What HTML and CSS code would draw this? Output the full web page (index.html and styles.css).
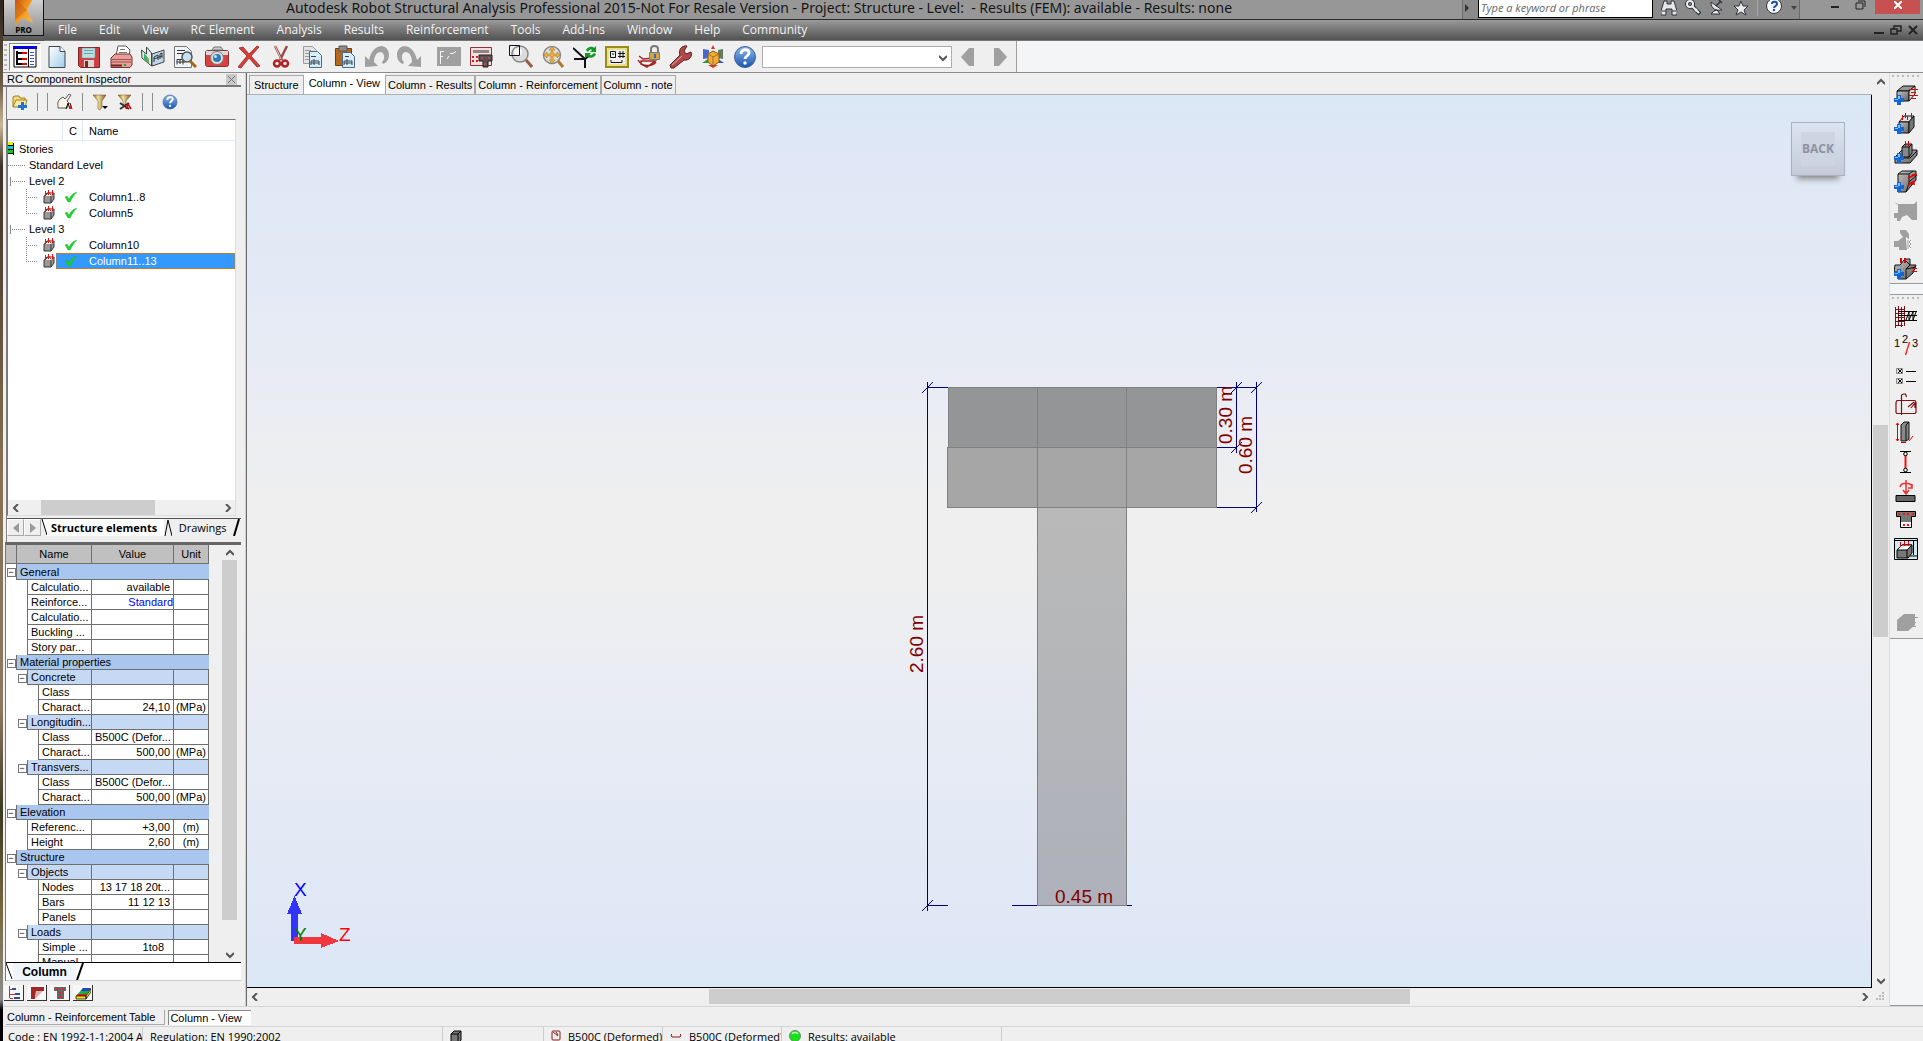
FILE: index.html
```
<!DOCTYPE html>
<html lang="en">
<head>
    <meta charset="utf-8">
    <title>Autodesk Robot Structural Analysis Professional 2015</title>
    <link rel="stylesheet" href="styles.css">
</head>
<body>
    <!-- Icon sprite, every icon is used by id -->
    <svg class="sprite" xmlns="http://www.w3.org/2000/svg">
        <defs>
            <linearGradient id="g-blue" x1="0" y1="0" x2="0" y2="1"><stop offset="0" stop-color="#8db9ea"/><stop offset="1" stop-color="#1a55b0"/></linearGradient>
            <linearGradient id="g-page" x1="0" y1="0" x2="1" y2="1"><stop offset="0" stop-color="#fff"/><stop offset="1" stop-color="#9fcdea"/></linearGradient>
            <linearGradient id="g-gold" x1="0" y1="0" x2="1" y2="0"><stop offset="0" stop-color="#8a6420"/><stop offset=".4" stop-color="#f3dfa0"/><stop offset="1" stop-color="#7c5717"/></linearGradient>
            <linearGradient id="g-grey" x1="0" y1="0" x2="1" y2="1"><stop offset="0" stop-color="#c4c4c4"/><stop offset="1" stop-color="#5f5f5f"/></linearGradient>
            <linearGradient id="g-logo" x1="0" y1="0" x2="1" y2="1"><stop offset="0" stop-color="#c8500f"/><stop offset=".5" stop-color="#f39a1e"/><stop offset="1" stop-color="#fbc55a"/></linearGradient>
        </defs>
        <symbol id="i-inspector" viewBox="0 0 24 24"><path d="M1 2h22v20H1z" fill="#fff" stroke="#000"/><path d="M0 1h24v3H0z" fill="#0000e0"/><path d="M4 6v14M4 8h7M4 14h7M4 19h7" stroke="#000" stroke-width="2" fill="none"/><path d="M9 7h5v2H9zM9 13h5v2H9zM9 18h5v2H9z" fill="#e00000"/><path d="M15.500 4v18" stroke="#000"/><path d="M17 7.500h4M17 10.500h4M17 13.500h4M17 16.500h4M17 19.500h4" stroke="#2a5be0"/></symbol>
        <symbol id="i-new" viewBox="0 0 24 24"><path d="M4 1.500h11l5 5v16H4z" fill="url(#g-page)" stroke="#3c4650"/><path d="M15 1.500v5h5" fill="#fff" stroke="#3c4650"/></symbol>
        <symbol id="i-save" viewBox="0 0 24 24"><path d="M1.500 2.500h21v20h-19l-2-2z" fill="#cf3f42" stroke="#7e2425"/><path d="M5 3h13v10H5z" fill="#b9dfe2" stroke="#8b8b8b" stroke-width=".5"/><path d="M7 5.500h9M7 8.500h9" stroke="#69a7ad"/><path d="M7 15h10v7H7z" fill="#d8d8d8"/><path d="M8 16h3v6H8z" fill="#7e2425"/></symbol>
        <symbol id="i-print" viewBox="0 0 24 24"><path d="M7 11l2-10h8l4 4-1 6z" fill="#fff" stroke="#555"/><path d="M11 4.500h5M10 7.500h8" stroke="#777"/><path d="M2 13l4-4h15l2 3v8l-2 2.500H2z" fill="#e3a09c" stroke="#7c2f2f"/><path d="M2 14.500h20M2 17h20" stroke="#a64c4a"/><path d="M15 19h2v2h-2z" fill="#1da52b"/><path d="M2 20.500h11" stroke="#6d2424" stroke-width="2"/></symbol>
        <symbol id="i-book" viewBox="0 0 24 24"><path d="M.500 5l5 4V2l5 6v13L1 13z" fill="#dfeee9" stroke="#444"/><path d="M3 8l5 6v5l-5-5z" fill="#36b36b"/><path d="M5 11l3 4v3z" fill="#e58b2a"/><path d="M11 21V9l12-4v12z" fill="#bdd6ea" stroke="#444"/><path d="M13 17v-5l4-2v5M19 14V9l2-1v5M13 14l8-3" stroke="#333" fill="none"/></symbol>
        <symbol id="i-preview" viewBox="0 0 24 24"><path d="M1.500 1.500h12l5 5v16h-17z" fill="#eef6fb" stroke="#777"/><path d="M4 5.500h8M4 8.500h6M4 19.500v-5h6v5M4 17h8M7 14v5" stroke="#333" fill="none"/><circle cx="14" cy="12" r="5" fill="#bcdcf3" fill-opacity=".8" stroke="#555" stroke-width="1.500"/><path d="M17 16l6 6" stroke="#9a6d1d" stroke-width="3"/></symbol>
        <symbol id="i-camera" viewBox="0 0 24 24"><rect x=".5" y="5.500" width="23" height="16" rx="2" fill="#d9403e" stroke="#7d3535"/><path d="M7 5l2-3h7l2 3z" fill="#ccc" stroke="#777"/><path d="M1 6h22v4H1z" fill="#d9d9d9"/><circle cx="12" cy="13" r="6.500" fill="#ddd" stroke="#777"/><circle cx="12" cy="13" r="4" fill="#2f79b7"/><circle cx="10.500" cy="11.500" r="1.500" fill="#bfe6fb"/></symbol>
        <symbol id="i-delete" viewBox="0 0 24 24"><path d="M2 3l4-1 6 7 8-8 2 1-8 9 9 10-3 1-8-9-8 10-3-1 9-11z" fill="#dc3d3b" stroke="#8d2a29" stroke-width=".8"/></symbol>
        <symbol id="i-cut" viewBox="0 0 24 24"><path d="M6 1l7 14M18 1l-7 14" stroke="#9b4a4a" stroke-width="2.500"/><path d="M6 1l6 13" stroke="#e2c6c6"/><circle cx="8" cy="18.500" r="3" fill="none" stroke="#b22222" stroke-width="2.500"/><circle cx="16" cy="18.500" r="3" fill="none" stroke="#b22222" stroke-width="2.500"/></symbol>
        <symbol id="i-copy" viewBox="0 0 24 24"><path d="M2.500 1.500h9l4 4v13h-13z" fill="#e3e3e3" stroke="#999"/><path d="M4 5.500h6M4 8.500h6M4 11.500h4M4 14.500h4" stroke="#999"/><path d="M8.500 6.500h8l4 4v12h-12z" fill="#d6ecf8" stroke="#4c6b80"/><path d="M10 11.500h5M10 20v-4h8v4M10 18h8M13 14v6" stroke="#345" fill="none"/></symbol>
        <symbol id="i-paste" viewBox="0 0 24 24"><path d="M2.500 3.500h16v17h-16z" fill="#b5681f" stroke="#6f3f12"/><path d="M6 1h8v5H6z" fill="#8c8c8c" stroke="#555"/><path d="M9.500 7.500h8l4 4v11h-12z" fill="#d6ecf8" stroke="#4c6b80"/><path d="M12 11.500h4M11 20v-4h8v4M11 18h8M14 14v6" stroke="#345" fill="none"/></symbol>
        <symbol id="i-undo" viewBox="0 0 24 24"><path d="M0 22V11l4 4C6 6 11 1 17 1c5 1 7 5 7 9 0 5-3 8-6 9l-1-2c3-2 3-9-1-10-5 0-7 5-7 10l4 4z" fill="#a0a0a0"/></symbol>
        <symbol id="i-redo" viewBox="0 0 24 24"><path d="M24 22V11l-4 4C18 6 13 1 7 1 2 2 0 6 0 10c0 5 3 8 6 9l1-2c-3-2-3-9 1-10 5 0 7 5 7 10l-4 4z" fill="#a0a0a0"/></symbol>
        <symbol id="i-chart" viewBox="0 0 24 24"><path d="M0 2h24v19H0z" fill="#a0a0a0"/><path d="M3.500 19V6M3 6.500h4M4 11.500h2M13 8.500h3l3-2M12 11l-2 3" stroke="#f4f4f4" fill="none"/></symbol>
        <symbol id="i-calc" viewBox="0 0 24 24"><path d="M1.500 2.500h21v18h-21z" fill="#f6dcdc" stroke="#8a3434"/><path d="M4 5h16v3H4z" fill="#888"/><path d="M3 11h2v2H3zM7 11h2v2H7zM3 15h2v2H3zM7 15h2v2H7z" fill="#c22"/><path d="M10 10h13v6h-4v6h-5v-6h-4z" fill="#555" stroke="#222"/><path d="M12 12h2v2h-2zM19 12h2v2h-2zM15 18h2v2h-2z" fill="#e33"/></symbol>
        <symbol id="i-zoom" viewBox="0 0 24 24"><circle cx="11" cy="9" r="8" fill="#dcdcdc" stroke="#888" stroke-width="1.500"/><circle cx="9" cy="7" r="4" fill="#f6f6f6"/><path d="M.500.500h10v10H.500z" fill="none" stroke="#111"/><path d="M17 15l6 7" stroke="#9c5a44" stroke-width="3"/></symbol>
        <symbol id="i-zoomall" viewBox="0 0 24 24"><circle cx="11" cy="10" r="8.500" fill="#dcdcdc" stroke="#888" stroke-width="1.500"/><path d="M11 2l3 3h-2v4h4V7l3 3-3 3v-2h-4v4h2l-3 3-3-3h2v-4H6v2l-3-3 3-3v2h4V5H8z" fill="#f0b03a" stroke="#a86e12" stroke-width=".5"/><path d="M17 16l5 6" stroke="#b07a2e" stroke-width="3"/></symbol>
        <symbol id="i-rotate" viewBox="0 0 24 24"><path d="M0 3l12 11v9M12 14H1M12 14l5-4" stroke="#111" stroke-width="2" fill="none"/><path d="M13 5c2-4 7-4 8-2l2-2v6h-6l2-2c-2-1-3 0-4 2zM23 9c-1 4-7 5-9 2l-2 2V8h6l-2 2c2 1 3 0 5-2z" fill="#0c9a20"/></symbol>
        <symbol id="i-display" viewBox="0 0 24 24"><path d="M1 2h22v20H1z" fill="#ece9c8" stroke="#9a8a17" stroke-width="2"/><path d="M3 4h18v16H3z" fill="#eee" stroke="#e4d43a"/><path d="M5.500 6.500h5v6h-5zM8 8v2M15 6v7M18 6v7M13 8.500h7M13 11.500h7M6 15v2.500h11V15" fill="none" stroke="#111"/></symbol>
        <symbol id="i-lock" viewBox="0 0 24 24"><path d="M2 11l4 3 12-1M4 16h14l-8 6-6-3zM1 15c4 7 14 7 18 2" stroke="#a22323" stroke-width="1.500" fill="none"/><path d="M14 8V4c0-4 7-4 7 0v4" stroke="#777" stroke-width="2" fill="none"/><path d="M12.500 7.500h10v7h-10z" fill="#dba23a" stroke="#5c84a8"/><path d="M17 9h2v4h-2z" fill="#356da0"/></symbol>
        <symbol id="i-wrench" viewBox="0 0 24 24"><path d="M1 20l10-10c-2-5 2-10 7-9l-3 5 2 3 5-2c2 4-2 9-7 8L5 23H2z" fill="#b04a48" stroke="#57201f"/><path d="M3 20l10-9" stroke="#e3a4a2"/></symbol>
        <symbol id="i-objects" viewBox="0 0 24 24"><path d="M2 4l6 1v8l-6 1z" fill="#4866cc"/><path d="M22 4l-5 1v8l5 1z" fill="#617c61"/><path d="M1 18l6-4 1 4z" fill="#2a9b3e"/><path d="M23 18l-6-4-1 4z" fill="#2b4fc4"/><path d="M12 0l2 4h-4zM7 20h10l-5 3z" fill="#dc3333"/><path d="M7 9l5-3 6 3v8l-6 4-5-4z" fill="#f0ab3a" stroke="#8a5a0c"/><path d="M7 9l5 3 6-3M12 12v8" fill="none" stroke="#a8701a"/></symbol>
        <symbol id="i-help" viewBox="0 0 24 24"><circle cx="12" cy="12" r="10.500" fill="url(#g-blue)" stroke="#3b5f95"/><path d="M8 9c0-6 9-5 8-1 0 3-4 3-4 6" stroke="#fff" stroke-width="2.800" fill="none"/><circle cx="12" cy="18" r="1.700" fill="#fff"/></symbol>
        <symbol id="i-folder" viewBox="0 0 16 16"><path d="M1 13V3l2-1h4l1 2h5v3" fill="#f5dc83" stroke="#a07f1c"/><path d="M1 13l3-7h11l-2 7z" fill="#fae9a4" stroke="#a07f1c"/><path d="M9 8h3v3h3v3h-3v2H9v-2H6v-3h3z" fill="#1e74d2"/></symbol>
        <symbol id="i-hand" viewBox="0 0 16 16"><path d="M1 14c0-4-1-6 2-9l3-2 2 2 4-5 2 1-4 6 2 2-2 5z" fill="#fbf5e8" stroke="#555"/><path d="M9 15l2-6 2 6M13 9l2 6" stroke="#111" fill="none"/><path d="M12 15l2-5 1 5z" fill="#d22"/></symbol>
        <symbol id="i-filter" viewBox="0 0 16 16"><path d="M1 1h13l-4 6v6l-2 3-2-1V7z" fill="url(#g-gold)" stroke="#6d5120" stroke-width=".5"/><path d="M10 12h6l-3 3z" fill="#000"/></symbol>
        <symbol id="i-filterx" viewBox="0 0 16 16"><path d="M1 1h13L9 7v4H6V7z" fill="url(#g-gold)" stroke="#6d5120" stroke-width=".5"/><path d="M3 9l9 6M12 9l-9 6" stroke="#333" stroke-width="2"/><path d="M9 15l2-5 3 5" stroke="#e00000" stroke-width="1.500" fill="none"/></symbol>
        <symbol id="i-stories" viewBox="0 0 7 14"><path d="M0 0h5v3H0z" fill="#ee0"/><path d="M0 3h5v4H0z" fill="#0cc"/><path d="M0 8h5v4H0z" fill="#1c1"/><path d="M0 3.500h5M0 7.500h5M0 11.500h5M5.500 1v12" stroke="#000"/></symbol>
        <symbol id="i-column" viewBox="0 0 12 14"><path d="M1 6l3-3h7v6l-3 4H1z" fill="#999" stroke="#333"/><path d="M1.500 6l3-2.500h6L8 6z" fill="#eee"/><path d="M8 6v7" stroke="#333"/><path d="M2.500 1v5M5.500 0v5M9.500 0v5M2 6l4-4 2 3" stroke="#e01515" fill="none"/></symbol>
        <symbol id="i-check" viewBox="0 0 12 12"><path d="M0 6l2-1 2 3c2-4 4-6 8-7-3 3-5 6-7 10H3z" fill="#19d42d" stroke="#0f9c20" stroke-width=".3"/></symbol>
        <symbol id="i-left" viewBox="0 0 8 8"><path d="M6 0L2 4l4 4" fill="none" stroke="#555" stroke-width="2"/></symbol>
        <symbol id="i-right" viewBox="0 0 8 8"><path d="M2 0l4 4-4 4" fill="none" stroke="#555" stroke-width="2"/></symbol>
        <symbol id="i-up" viewBox="0 0 8 8"><path d="M0 6l4-4 4 4" fill="none" stroke="#555" stroke-width="2"/></symbol>
        <symbol id="i-down" viewBox="0 0 8 8"><path d="M0 2l4 4 4-4" fill="none" stroke="#555" stroke-width="2"/></symbol>
        <symbol id="i-plus" viewBox="0 0 10 10"><path d="M3 0h4v3h3v4H7v3H3V7H0V3h3z" fill="#1467d0"/><path d="M4 1h2v3H4zM1 4h3v1H1z" fill="#7fc0ff"/></symbol>
        <symbol id="i-beam" viewBox="0 0 24 24"><path d="M3 8l6-5h12l-6 5z" fill="#999" stroke="#111"/><path d="M3 8h12v10H3z" fill="url(#g-grey)" stroke="#111"/><path d="M15 8l6-5v8l-6 7z" fill="#ddd" stroke="#111"/><path d="M15 6.500h9M17 9.500h5M15 12.500h9M17 15.500h5" stroke="#e00000"/><use href="#i-plus" x="0" y="12" width="10" height="10"/></symbol>
        <symbol id="i-col" viewBox="0 0 24 24"><path d="M5 10l5-6h10l-5 6z" fill="#ddd" stroke="#111"/><path d="M5 10h10v11H5z" fill="url(#g-grey)" stroke="#111"/><path d="M15 10l5-6v11l-5 6z" fill="#777" stroke="#111"/><path d="M8.500 3v5M11.500 1v5M13.500 4v4M17.500 1v5" stroke="#e00000"/><use href="#i-plus" x="0" y="12" width="10" height="10"/></symbol>
        <symbol id="i-foot" viewBox="0 0 24 24"><path d="M1 16l7-7h15v5l-7 8H1z" fill="url(#g-grey)" stroke="#111"/><path d="M8 16V6l3-3h7v9l-3 4z" fill="#888" stroke="#111"/><path d="M8 6h7v10M15 6l3-3M1 17h15l7-7" stroke="#111" fill="none"/><path d="M11.500 0v5M14.500 0v5" stroke="#e00000"/><use href="#i-plus" x="0" y="12" width="10" height="10"/></symbol>
        <symbol id="i-wall" viewBox="0 0 24 24"><path d="M4 4l4-3h14v9L12 22H4z" fill="url(#g-grey)" stroke="#111"/><path d="M4 4h11v9l-3 9M15 4l4-3M15 12l8-7" stroke="#111" fill="none"/><path d="M14 8l8-4M18 5h5M14 15l7-4M17 14h4" stroke="#e00000" stroke-width="1.500"/><use href="#i-plus" x="0" y="12" width="10" height="10"/></symbol>
        <symbol id="i-deep" viewBox="0 0 24 24"><path d="M0 3l4 2h16l3-3v19h-5l-5-5-5 2-2 4H3v-3H0v-5h4V6z" fill="#a0a0a0"/></symbol>
        <symbol id="i-stair" viewBox="0 0 24 24"><path d="M6 2h6l3 4v16H5v-3H0v-6h4l5-4-3-4z" fill="#a0a0a0"/><path d="M12 9l5 4v8l-4 2z" fill="#fff"/><path d="M14 12v9M17 12l-2 2 2 2-2 2 2 2" stroke="#999" fill="none"/></symbol>
        <symbol id="i-joint" viewBox="0 0 24 24"><path d="M1 8h5l5-6h5v6h6l-3 8-7 6H4v-7H0z" fill="url(#g-grey)" stroke="#111"/><path d="M11 3l5 5-4 4 10-2M12 12v10" stroke="#111" fill="none"/><path d="M6 1h2v5H6zM10 1h2v5h-2zM17 11h6v1h-6zM18 14h5v1h-5z" fill="#e00000"/><use href="#i-plus" x="0" y="12" width="10" height="10"/></symbol>
        <symbol id="i-mesh" viewBox="0 0 24 24"><path d="M1.500 2v21M4.500 1v20M7.500 2v20M10.500 1v20M1 4.500h10M1 8.500h10M1 12.500h10M1 16.500h10M1 20.500h8" stroke="#7d1010"/><path d="M4 6.500h19M4 10.500h19M4 15.500h19M12 15l3-8v8l4-8v8l3-8" stroke="#000" fill="none"/></symbol>
        <symbol id="i-list" viewBox="0 0 24 24"><path d="M2.500 5.500h6v5h-6zM2.500 15.500h6v5h-6z" fill="#ddd" stroke="#888"/><path d="M4 6l4 4M8 6l-4 4M4 16l4 4M8 16l-4 4M12 8.500h10M12 18.500h10" stroke="#000"/></symbol>
        <symbol id="i-stirrup" viewBox="0 0 24 24"><path d="M2 10.500l1-2h18l1 2v10l-1 1H3l-1-1zM7.500 23V3l2-1h2l1 3M14 15l6-5M17 16l4-5v5" fill="none" stroke="#7d1010" stroke-width="1.200"/></symbol>
        <symbol id="i-dims" viewBox="0 0 24 24"><path d="M7 4l3-3h5v17l-3 2H7z" fill="#888" stroke="#111"/><path d="M12 20V4l3-3" stroke="#111" fill="none"/><path d="M3.500 2v18M2 4l1.500-2L5 4M2 18l1.500 2L5 18M7 21.500h5M15 20l4-5" stroke="#e00000" fill="none"/></symbol>
        <symbol id="i-buckling" viewBox="0 0 24 24"><path d="M6 1.500h11M6 22.500h11" stroke="#000"/><path d="M11.500 5v14" stroke="#ff1010" stroke-width="2"/><circle cx="11.500" cy="4" r="1.800" fill="#eee" stroke="#000"/><circle cx="11.500" cy="20" r="1.800" fill="#eee" stroke="#000"/></symbol>
        <symbol id="i-load" viewBox="0 0 24 24"><path d="M2 16.500h19v6H2z" fill="#666" stroke="#000"/><path d="M12 1v14M9 11l3 4 3-4M6 8c1-5 11-5 12 0M18 5v4h-4" fill="none" stroke="#f03030" stroke-width="1.500"/></symbol>
        <symbol id="i-section" viewBox="0 0 24 24"><path d="M2.500 3.500h19v5h-4v11h-11v-11h-4z" fill="#777" stroke="#000"/><path d="M7 14h10v5H7z" fill="#fff"/><path d="M4 5h2v2H4zM9 5h2v2H9zM13 5h2v2h-2zM18 5h2v2h-2zM9 16h2v2H9zM13 16h2v2h-2z" fill="#ff1010"/></symbol>
        <symbol id="i-dialog" viewBox="0 0 24 24"><path d="M.500 1.500h23v21H.500z" fill="#cfeaf2" stroke="#000"/><path d="M1 3.500h22M19.500 4v14M15 19h8" stroke="#000"/><path d="M3 13l5-5h10v8l-4 5H3z" fill="#777" stroke="#000"/><path d="M3 13h10l5-5H8z" fill="#fff" stroke="#000"/><path d="M13 13v8" stroke="#000"/><path d="M6.500 5v5M10.500 4v5M14.500 4v5" stroke="#e00000"/></symbol>
        <symbol id="i-solid" viewBox="0 0 24 24"><path d="M3 9l7-6h11v11l-7 6H3z" fill="#a0a0a0"/><path d="M19 6.500h5M17 11.500h5M16 15.500h6" stroke="#a0a0a0"/></symbol>
    </svg>

    <div class="desktop"></div>
    <div class="app">
        <header class="header">
            <button class="app-button" aria-label="Application menu">
                <svg width="30" height="25" viewBox="0 0 30 25"><path d="M6-3h19L18 10l6 13-10-5-8 7z" fill="url(#g-logo)"/><path d="M6-2l12 12L6 20z" fill="#b9540f" fill-opacity=".35"/></svg>
                <span>PRO</span>
            </button>
            <div class="titlebar">
                <h1 class="title">Autodesk Robot Structural Analysis Professional 2015-Not For Resale Version - Project: Structure - Level: &nbsp;- Results (FEM): available - Results: none</h1>
                <div class="infocenter">
                    <svg width="5" height="8"><path d="M0 0l4 4-4 4z" fill="#333"/></svg>
                    <input class="search" type="text" placeholder="Type a keyword or phrase" aria-label="Search">
                    <button aria-label="Find"><svg width="16" height="16"><path d="M3 1h3v3h4V1h3l3 10v4h-5v-6H5v6H0v-4z" fill="#e6e6e6" stroke="#2d3440"/><path d="M1 11h4M11 11h4" stroke="#2d3440"/></svg></button>
                    <button aria-label="Subscription"><svg width="16" height="16"><circle cx="5" cy="4" r="3" fill="none" stroke="#2d3440" stroke-width="4"/><path d="M7 6l8 8" stroke="#2d3440" stroke-width="4"/><circle cx="5" cy="4" r="3" fill="none" stroke="#eee" stroke-width="2"/><path d="M7 6l7 7M10 11l2-2" stroke="#eee" stroke-width="2"/></svg></button>
                    <button aria-label="Communication"><svg width="16" height="16"><path d="M2 2c0 7 5 9 11 8zM2 14h9l-3-4-3 1z" fill="#e6e6e6" stroke="#2d3440"/><path d="M7 6l5-5M10 0l3 3" stroke="#2d3440" stroke-width="1.500"/></svg></button>
                    <button aria-label="Favorites"><svg width="16" height="16"><path d="M8 1l2 5h5l-4 4 2 5-5-3-5 3 2-5-4-4h5z" fill="#e9e9e9" stroke="#2d3440"/></svg></button>
                    <span class="divider"></span>
                    <button aria-label="Help"><svg width="17" height="17"><circle cx="8" cy="7" r="7.500" fill="#f5f7fb" stroke="#334"/><path d="M6 5c0-3 5-3 5 0 0 2-3 2-3 4" fill="none" stroke="#1c4ba5" stroke-width="2"/><circle cx="8" cy="11" r="1.200" fill="#1c4ba5"/></svg></button>
                    <svg width="6" height="4"><path d="M0 0h6L3 4z" fill="#444"/></svg>
                </div>
                <div class="window-buttons">
                    <button class="minimize" aria-label="Minimize"><svg width="10" height="12"><path d="M1 6h8v2H1z" fill="#222"/></svg></button>
                    <button aria-label="Restore"><svg width="11" height="12"><path d="M1 3h7v6H1zM3 1h7v6" fill="none" stroke="#222"/></svg></button>
                    <button class="close" aria-label="Close"><svg width="8" height="8"><path d="M0 0l8 8M8 0L0 8" stroke="#fff" stroke-width="2"/></svg></button>
                </div>
            </div>
            <div class="menubar">
                <nav class="menu">
                    <a href="#">File</a><a href="#">Edit</a><a href="#">View</a><a href="#">RC Element</a><a href="#">Analysis</a><a href="#">Results</a><a href="#">Reinforcement</a><a href="#">Tools</a><a href="#">Add-Ins</a><a href="#">Window</a><a href="#">Help</a><a href="#">Community</a>
                </nav>
                <div class="mdi-buttons">
                    <button aria-label="Minimize document"><svg width="10" height="10"><path d="M0 7h10v2H0z" fill="#222"/></svg></button>
                    <button aria-label="Restore document"><svg width="12" height="10"><path d="M1 4h6v5H1zM4 4V1h7v5H7" fill="none" stroke="#222" stroke-width="1.500"/></svg></button>
                    <button aria-label="Close document"><svg width="10" height="10"><path d="M1 1l8 8M9 1L1 9" stroke="#222" stroke-width="2"/></svg></button>
                </div>
            </div>
        </header>

        <div class="toolbar">
            <div class="tools">
                <span class="grip"></span>
                <button class="tool pressed" aria-label="Inspector"><svg><use href="#i-inspector"/></svg></button>
                <button class="tool" aria-label="New"><svg><use href="#i-new"/></svg></button>
                <button class="tool" aria-label="Save"><svg><use href="#i-save"/></svg></button>
                <button class="tool" aria-label="Print"><svg><use href="#i-print"/></svg></button>
                <button class="tool" aria-label="Compose printout"><svg><use href="#i-book"/></svg></button>
                <button class="tool" aria-label="Preview"><svg><use href="#i-preview"/></svg></button>
                <button class="tool" aria-label="Capture"><svg><use href="#i-camera"/></svg></button>
                <button class="tool" aria-label="Delete"><svg><use href="#i-delete"/></svg></button>
                <button class="tool" aria-label="Cut"><svg><use href="#i-cut"/></svg></button>
                <button class="tool" aria-label="Copy"><svg><use href="#i-copy"/></svg></button>
                <button class="tool" aria-label="Paste"><svg><use href="#i-paste"/></svg></button>
                <button class="tool" aria-label="Undo" disabled><svg><use href="#i-undo"/></svg></button>
                <button class="tool" aria-label="Redo" disabled><svg><use href="#i-redo"/></svg></button>
                <button class="tool group" aria-label="Diagrams" disabled><svg><use href="#i-chart"/></svg></button>
                <button class="tool" aria-label="Calculations"><svg><use href="#i-calc"/></svg></button>
                <button class="tool group" aria-label="Zoom window"><svg><use href="#i-zoom"/></svg></button>
                <button class="tool" aria-label="Zoom all"><svg><use href="#i-zoomall"/></svg></button>
                <button class="tool" aria-label="Rotate"><svg><use href="#i-rotate"/></svg></button>
                <button class="tool" aria-label="Display"><svg><use href="#i-display"/></svg></button>
                <button class="tool" aria-label="Lock"><svg><use href="#i-lock"/></svg></button>
                <button class="tool" aria-label="Options"><svg><use href="#i-wrench"/></svg></button>
                <button class="tool" aria-label="Objects"><svg><use href="#i-objects"/></svg></button>
                <button class="tool" aria-label="Help"><svg><use href="#i-help"/></svg></button>
                <div class="combo">
                    <select aria-label="Layout"><option></option></select>
                    <svg width="8" height="8"><use href="#i-down"/></svg>
                </div>
                <button class="tool" aria-label="Previous" disabled><svg viewBox="0 0 24 24"><path d="M18 3v18h-5l-8-9 8-9z" fill="#a0a0a0"/></svg></button>
                <button class="tool" aria-label="Next" disabled><svg viewBox="0 0 24 24"><path d="M6 3v18h5l8-9-8-9z" fill="#a0a0a0"/></svg></button>
            </div>
        </div>

        <div class="workspace">
            <aside class="inspector">
                <section class="components">
                    <div class="panel-title">
                        <h2>RC Component Inspector</h2>
                        <button aria-label="Close panel"><svg width="7" height="7"><path d="M0 0l7 7M7 0L0 7" stroke="#777"/></svg></button>
                    </div>
                    <div class="panel-body">
                        <div class="mini-tools">
                            <button aria-label="Open"><svg><use href="#i-folder"/></svg></button>
                            <span class="sep"></span><span class="sep"></span>
                            <button aria-label="Select"><svg><use href="#i-hand"/></svg></button>
                            <span class="sep"></span>
                            <button aria-label="Filter"><svg><use href="#i-filter"/></svg></button>
                            <button aria-label="Clear filter"><svg><use href="#i-filterx"/></svg></button>
                            <span class="sep"></span><span class="sep"></span>
                            <button aria-label="Help"><svg><use href="#i-help"/></svg></button>
                        </div>
                        <div class="tree">
                            <div class="tree-head"><span></span><span>C</span><span>Name</span></div>
                            <ul class="tree-list">
                                <li class="root"><svg width="7" height="14"><use href="#i-stories"/></svg>Stories</li>
                                <li class="level"><i class="line"></i>Standard Level</li>
                                <li class="level open"><i class="line"></i>Level 2</li>
                                <li class="item"><i class="branch"></i><svg class="col"><use href="#i-column"/></svg><a href="#"><svg class="ok"><use href="#i-check"/></svg>Column1..8</a></li>
                                <li class="item"><i class="branch"></i><svg class="col"><use href="#i-column"/></svg><a href="#"><svg class="ok"><use href="#i-check"/></svg>Column5</a></li>
                                <li class="level open"><i class="line"></i>Level 3</li>
                                <li class="item"><i class="branch"></i><svg class="col"><use href="#i-column"/></svg><a href="#"><svg class="ok"><use href="#i-check"/></svg>Column10</a></li>
                                <li class="item selected"><i class="branch"></i><svg class="col"><use href="#i-column"/></svg><a href="#"><svg class="ok"><use href="#i-check"/></svg>Column11..13</a></li>
                            </ul>
                            <div class="hscroll">
                                <button aria-label="Scroll left"><svg><use href="#i-left"/></svg></button>
                                <div class="track tree-track"><div class="thumb"></div></div>
                                <button aria-label="Scroll right"><svg><use href="#i-right"/></svg></button>
                            </div>
                        </div>
                        <div class="sheet-tabs">
                            <button class="step" aria-label="Previous tab"><svg width="6" height="10"><path d="M6 0v10L0 5z" fill="#999"/></svg></button>
                            <button class="step" aria-label="Next tab"><svg width="6" height="10"><path d="M0 0v10l6-5z" fill="#999"/></svg></button>
                            <svg class="slant on" width="6" height="17"><path d="M0 0h1l5 17H0z" fill="#efefef"/><path d="M1 0l5 16" fill="none" stroke="#000"/></svg>
                            <button class="sheet active">Structure elements</button>
                            <svg class="slant" width="8" height="17"><path d="M1 17L4 1l4 16" fill="#efefef" stroke="#000"/></svg>
                            <button class="sheet">Drawings</button>
                            <svg class="slant" width="8" height="17"><path d="M1 17L6 0" fill="none" stroke="#000" stroke-width="2"/></svg>
                        </div>
                    </div>
                </section>

                <section class="properties">
                    <div class="props-body">
                        <div class="props-clip">
                            <table class="props">
                                <colgroup><col class="c-gut"><col class="c-gut"><col class="c-gut"><col class="c-name"><col class="c-val"><col class="c-unit"></colgroup>
                                <thead><tr><th></th><th colspan="3">Name</th><th>Value</th><th>Unit</th></tr></thead>
                                <tbody>
                                    <tr class="cat first"><td class="gut"><button aria-label="Collapse">−</button></td><th colspan="5">General</th></tr>
                                    <tr><td class="gut"></td><td class="gut"></td><td colspan="2">Calculatio...</td><td class="val">available</td><td class="unit"></td></tr>
                                    <tr><td class="gut"></td><td class="gut"></td><td colspan="2">Reinforce...</td><td class="val link"><a href="#">Standard</a></td><td class="unit"></td></tr>
                                    <tr><td class="gut"></td><td class="gut"></td><td colspan="2">Calculatio...</td><td class="val"></td><td class="unit"></td></tr>
                                    <tr><td class="gut"></td><td class="gut"></td><td colspan="2">Buckling ...</td><td class="val"></td><td class="unit"></td></tr>
                                    <tr><td class="gut"></td><td class="gut"></td><td colspan="2">Story par...</td><td class="val"></td><td class="unit"></td></tr>
                                    <tr class="cat"><td class="gut"><button aria-label="Collapse">−</button></td><th colspan="5">Material properties</th></tr>
                                    <tr class="sub"><td class="gut"></td><td class="gut"><button aria-label="Collapse">−</button></td><th colspan="2">Concrete</th><td></td><td></td></tr>
                                    <tr><td class="gut"></td><td class="gut"></td><td class="gut"></td><td>Class</td><td class="val"></td><td class="unit"></td></tr>
                                    <tr><td class="gut"></td><td class="gut"></td><td class="gut"></td><td>Charact...</td><td class="val">24,10</td><td class="unit">(MPa)</td></tr>
                                    <tr class="sub"><td class="gut"></td><td class="gut"><button aria-label="Collapse">−</button></td><th colspan="2">Longitudin...</th><td></td><td></td></tr>
                                    <tr><td class="gut"></td><td class="gut"></td><td class="gut"></td><td>Class</td><td class="val">B500C (Defor...</td><td class="unit"></td></tr>
                                    <tr><td class="gut"></td><td class="gut"></td><td class="gut"></td><td>Charact...</td><td class="val">500,00</td><td class="unit">(MPa)</td></tr>
                                    <tr class="sub"><td class="gut"></td><td class="gut"><button aria-label="Collapse">−</button></td><th colspan="2">Transvers...</th><td></td><td></td></tr>
                                    <tr><td class="gut"></td><td class="gut"></td><td class="gut"></td><td>Class</td><td class="val">B500C (Defor...</td><td class="unit"></td></tr>
                                    <tr><td class="gut"></td><td class="gut"></td><td class="gut"></td><td>Charact...</td><td class="val">500,00</td><td class="unit">(MPa)</td></tr>
                                    <tr class="cat"><td class="gut"><button aria-label="Collapse">−</button></td><th colspan="5">Elevation</th></tr>
                                    <tr><td class="gut"></td><td class="gut"></td><td colspan="2">Referenc...</td><td class="val">+3,00</td><td class="unit">(m)</td></tr>
                                    <tr><td class="gut"></td><td class="gut"></td><td colspan="2">Height</td><td class="val">2,60</td><td class="unit">(m)</td></tr>
                                    <tr class="cat"><td class="gut"><button aria-label="Collapse">−</button></td><th colspan="5">Structure</th></tr>
                                    <tr class="sub"><td class="gut"></td><td class="gut"><button aria-label="Collapse">−</button></td><th colspan="2">Objects</th><td></td><td></td></tr>
                                    <tr><td class="gut"></td><td class="gut"></td><td class="gut"></td><td>Nodes</td><td class="val">13 17 18 20t...</td><td class="unit"></td></tr>
                                    <tr><td class="gut"></td><td class="gut"></td><td class="gut"></td><td>Bars</td><td class="val">11 12 13</td><td class="unit"></td></tr>
                                    <tr><td class="gut"></td><td class="gut"></td><td class="gut"></td><td>Panels</td><td class="val"></td><td class="unit"></td></tr>
                                    <tr class="sub"><td class="gut"></td><td class="gut"><button aria-label="Collapse">−</button></td><th colspan="2">Loads</th><td></td><td></td></tr>
                                    <tr><td class="gut"></td><td class="gut"></td><td class="gut"></td><td>Simple ...</td><td class="val wide">1to8</td><td class="unit"></td></tr>
                                    <tr><td class="gut"></td><td class="gut"></td><td class="gut"></td><td>Manual</td><td class="val"></td><td class="unit"></td></tr>
                                </tbody>
                            </table>
                        </div>
                        <div class="vscroll">
                            <button aria-label="Scroll up"><svg><use href="#i-up"/></svg></button>
                            <div class="track props-track"><div class="thumb"></div></div>
                            <button aria-label="Scroll down"><svg><use href="#i-down"/></svg></button>
                        </div>
                    </div>
                    <div class="props-tab">
                        <svg width="7" height="17"><path d="M0 0l6 16" fill="none" stroke="#000"/></svg>
                        <button>Column</button>
                        <svg width="8" height="17"><path d="M1 17L7 0" fill="none" stroke="#000" stroke-width="2"/></svg>
                    </div>
                </section>

                <div class="panel-switch">
                    <button aria-label="Tree"><svg width="14" height="14"><path d="M2.500 0v12M3 3.500h3M3 8.500h5M3 12.500h3" stroke="#b33" fill="none"/><path d="M5 2h4v2H5zM8 7h5v2H8zM7 11h6v2H7z" fill="#35509a"/></svg></button>
                    <button aria-label="Beam"><svg width="14" height="14"><path d="M1 1h13v4H6L5 13H1z" fill="#a12626"/><path d="M5 13L6 5l7 0z" fill="#d8b0b0"/></svg></button>
                    <button aria-label="Section"><svg width="14" height="14"><path d="M1 1h12v4h-2v8H4V5H1z" fill="#666"/><path d="M3 2h2v2H3zM9 2h2v2H9zM6 10h2v2H6zM6 6h2v2H6z" fill="#e22"/></svg></button>
                    <button aria-label="Maps"><svg width="16" height="14"><path d="M1 10l7-8h8l-5 8z" fill="#1cae3c"/><path d="M8 2h8l-2 3H6z" fill="#2a3fd0"/><path d="M3 8h9l-1 2H1z" fill="#d22"/><path d="M1 10h10v3H1zM11 10l5-7v3l-5 7z" fill="#f3e515" stroke="#000" stroke-width=".7"/></svg></button>
                </div>
            </aside>

            <main class="document">
                <div class="doc-tabs">
                    <button>Structure</button><button class="active">Column - View</button><button>Column - Results</button><button>Column - Reinforcement</button><button>Column - note</button>
                </div>
                <div class="view">
                    <svg class="drawing" viewBox="0 0 1624 892" shape-rendering="crispEdges">
                        <defs>
                            <linearGradient id="g-stem" x1="0" y1="0" x2="0" y2="1"><stop offset="0" stop-color="#b9b9b9"/><stop offset=".4" stop-color="#b5b6b8"/><stop offset="1" stop-color="#aeb1bb"/></linearGradient>
                        </defs>
                        <!-- Column and slab -->
                        <g stroke="#808080">
                            <path d="M790.500 412.500h89v398h-89z" fill="url(#g-stem)"/>
                            <path d="M701.500 292.500h268v60h-268z" fill="#949596"/>
                            <path d="M700.500 352.500h269v60h-269z" fill="#a6a6a7"/>
                            <path d="M790.500 292v120M879.500 292v120"/>
                        </g>
                        <!-- Dimension lines -->
                        <g stroke="#000080" fill="none">
                            <path d="M680.500 287v529M680 292.500h21M680 810.500h21M765 810.500h25M880 810.500h5"/>
                            <path d="M970 292.500h40M989.500 287v71M970 352.500h20M1009.500 287v130M970 412.500h40"/>
                            <path d="M675 298l11-11M675 816l11-11M984 298l11-11M1004 298l11-11M984 358l11-11M1004 418l11-11"/>
                        </g>
                        <g class="dims">
                            <text x="808" y="808">0.45 m</text>
                            <text transform="translate(676 578) rotate(-90)">2.60 m</text>
                            <text transform="translate(985 349) rotate(-90)">0.30 m</text>
                            <text transform="translate(1005 379) rotate(-90)">0.60 m</text>
                        </g>
                        <!-- Axis tripod -->
                        <g class="axes">
                            <path d="M44 846v-27h-4l7.500-18 7.500 18h-4v27z" fill="#3333ff"/>
                            <path d="M47 842h27v-4l18 8-18 7v-4H47z" fill="#f0373d"/>
                            <text x="47" y="801" fill="#0000ff">X</text>
                            <text x="47" y="846" fill="#008000">Y</text>
                            <text x="92" y="846" fill="#ff0000">Z</text>
                        </g>
                    </svg>
                    <button class="viewcube"><span>BACK</span></button>
                </div>
                <div class="vscroll">
                    <button aria-label="Scroll up"><svg><use href="#i-up"/></svg></button>
                    <div class="track view-vtrack"><div class="thumb"></div></div>
                    <button aria-label="Scroll down"><svg><use href="#i-down"/></svg></button>
                </div>
                <div class="hscroll">
                    <button aria-label="Scroll left"><svg><use href="#i-left"/></svg></button>
                    <div class="track view-htrack"><div class="thumb"></div></div>
                    <button aria-label="Scroll right"><svg><use href="#i-right"/></svg></button>
                </div>
                <svg class="size-grip" width="10" height="10"><path d="M6 0h2v2H6zM3 3h2v2H3zM6 3h2v2H6zM0 6h2v2H0zM3 6h2v2H3zM6 6h2v2H6z" fill="#bdbdbd"/></svg>
            </main>

            <aside class="dock">
                <div class="dock-bar">
                    <span class="grip-h"></span>
                    <button aria-label="Beam"><svg><use href="#i-beam"/></svg></button>
                    <button aria-label="Column"><svg><use href="#i-col"/></svg></button>
                    <button aria-label="Footing"><svg><use href="#i-foot"/></svg></button>
                    <button aria-label="Wall"><svg><use href="#i-wall"/></svg></button>
                    <button aria-label="Deep beam" disabled><svg><use href="#i-deep"/></svg></button>
                    <button aria-label="Stairs" disabled><svg><use href="#i-stair"/></svg></button>
                    <button aria-label="Joint"><svg><use href="#i-joint"/></svg></button>
                </div>
                <div class="dock-bar second">
                    <span class="grip-h"></span>
                    <button aria-label="Reinforcement"><svg><use href="#i-mesh"/></svg></button>
                    <button aria-label="Numbering"><svg viewBox="0 0 24 24"><path d="M15.500 8l-4 13" stroke="#e33" stroke-width="1.500"/><text x="0" y="13">1</text><text x="8" y="9">2</text><text x="18" y="13">3</text></svg></button>
                    <button aria-label="List"><svg><use href="#i-list"/></svg></button>
                    <button aria-label="Stirrups"><svg><use href="#i-stirrup"/></svg></button>
                    <button aria-label="Dimensions"><svg><use href="#i-dims"/></svg></button>
                    <button aria-label="Buckling"><svg><use href="#i-buckling"/></svg></button>
                    <button aria-label="Loads"><svg><use href="#i-load"/></svg></button>
                    <button aria-label="Section"><svg><use href="#i-section"/></svg></button>
                    <button aria-label="Column dialog"><svg><use href="#i-dialog"/></svg></button>
                    <button class="apart" aria-label="Solid" disabled><svg><use href="#i-solid"/></svg></button>
                </div>
            </aside>
        </div>

        <div class="window-list">
            <button>Column - Reinforcement Table</button>
            <button class="active">Column - View</button>
        </div>

        <footer class="status">
            <span class="s-code">Code : EN 1992-1-1:2004 AC</span>
            <span class="s-reg">Regulation: EN 1990:2002</span>
            <span class="s-cube"><svg width="12" height="13"><path d="M1 4l3-3h7v9l-3 4H1z" fill="#777" stroke="#000"/><path d="M1 4h7v9M8 4l3-3" fill="none" stroke="#000"/></svg></span>
            <span class="s-steel"><svg width="10" height="11"><rect x="1" y="1" width="8" height="9" rx="1" fill="none" stroke="#8b1a1a"/><path d="M2 2l5 4M5 2l2 3" stroke="#8b1a1a"/></svg>B500C (Deformed)</span>
            <span class="s-steel"><svg width="12" height="11"><path d="M2 4L1 5l1 2h8l1-2-1-1" fill="none" stroke="#8b1a1a"/></svg>B500C (Deformed)</span>
            <span class="s-result"><svg width="12" height="13"><circle cx="6" cy="6" r="5.500" fill="#14e51a" stroke="#6d8a6d"/><path d="M3 4c1-2 5-2 6 0" fill="none" stroke="#c9ffc9" stroke-width="1.500"/></svg>Results: available</span>
        </footer>
    </div>
</body>
</html>
```
FILE: styles.css
```
* {
    box-sizing: border-box;
}
body {
    margin: 0;
    height: 100vh;
    display: flex;
    overflow: hidden;
    background: #efefef;
    color: #000;
    font-family: "Liberation Sans", Arial, sans-serif;
    font-size: 11px;
}
button {
    padding: 0;
    border: 0;
    background: none;
    font: inherit;
    color: inherit;
    display: flex;
    align-items: center;
    justify-content: center;
}
a {
    color: inherit;
    text-decoration: none;
}
svg {
    display: block;
    flex: none;
}
h1, h2 {
    margin: 0;
    font-weight: normal;
}
.sprite {
    position: absolute;
    width: 0;
    height: 0;
}
.desktop {
    width: 3px;
    flex: none;
    background: linear-gradient(#2a2118, #6b5b45 8%, #c9b795 12%, #3c3226 16%, #857052 45%, #8c7a60 68%, #3c3a22 78%, #7a6c40 88%, #8b8b8b 96%, #000 97%);
}
.app {
    flex: 1;
    min-width: 0;
    display: flex;
    flex-direction: column;
}

/* Title and menu */
.header {
    display: grid;
    grid-template-columns: 41px 1fr;
    grid-template-rows: 20px 21px;
    flex: none;
    background: linear-gradient(#979797 20px, #9a9a9a 20px, #555);
}
.app-button {
    grid-row: 1 / 3;
    height: 36px;
    flex-direction: column;
    justify-content: space-between;
    align-self: start;
    border: 1px solid #111;
    border-top: 0;
    background: linear-gradient(#d0d0d0, #8e8e8e);
    font: bold 8px/10px "Open Sans", sans-serif;
}
.titlebar {
    display: flex;
    min-width: 0;
    background: #979797;
    border-bottom: 1px solid #2d2a2c;
}
.title {
    flex: 1;
    padding-left: 12px;
    text-align: center;
    font: 14px/16px "Noto Sans", "Open Sans", sans-serif;
    color: #151515;
    white-space: nowrap;
}
.infocenter {
    width: 338px;
    display: flex;
    align-items: center;
    gap: 8px;
    padding: 0 2px 4px;
    border: 1px solid #6d6d6d;
    border-width: 0 1px;
    background: #8a8a8a;
}
.search {
    flex: 1;
    min-width: 0;
    height: 18px;
    align-self: start;
    border: 1px solid #000;
    border-top: 0;
    padding: 0 2px 3px;
    background: #fff;
    font: italic 11px "Open Sans", sans-serif;
}
.search::placeholder {
    color: #666;
}
.divider {
    width: 1px;
    height: 16px;
    background: #a5a5a5;
}
.window-buttons {
    width: 123px;
    display: flex;
    justify-content: flex-end;
    align-items: flex-start;
    gap: 9px;
    padding-right: 3px;
}
.window-buttons .minimize {
    margin-right: 6px;
}
.window-buttons .close {
    width: 45px;
    height: 14px;
    padding-bottom: 4px;
    background: #c75050;
}
.menubar {
    display: flex;
    justify-content: space-between;
    background: linear-gradient(#9a9a9a, #525252);
    border-bottom: 1px solid #777;
}
.menu {
    display: flex;
    padding-left: 3px;
    font: 12px/19px "Open Sans", sans-serif;
    color: #f2f2f2;
}
.menu a {
    padding: 0 11px;
}
.mdi-buttons {
    display: flex;
    align-items: center;
    gap: 6px;
    padding-right: 5px;
}

/* Main toolbar */
.toolbar {
    height: 32px;
    flex: none;
    display: flex;
    background: #f4f5f7;
    border-bottom: 1px solid #8c8c8c;
}
.tools {
    display: flex;
    align-items: center;
    background: #efefef;
    border-right: 1px solid #a0a0a0;
}
.grip {
    width: 3px;
    height: 26px;
    margin: 0 2px 0 1px;
    background: repeating-linear-gradient(#bbb 0 2px, #efefef 2px 5px);
}
.tool {
    width: 32px;
    height: 28px;
}
.tool svg {
    width: 24px;
    height: 24px;
}
.tool.group {
    margin-left: 8px;
}
.tool.pressed {
    background: #f8f8f8;
    border: 1px solid #888;
    border-right-color: #fff;
    border-bottom-color: #fff;
}
.combo {
    position: relative;
    width: 190px;
    margin-left: 1px;
}
.combo select {
    appearance: none;
    display: block;
    width: 100%;
    height: 22px;
    border: 1px solid #abadb3;
    border-radius: 0;
    background: #fff;
}
.combo svg {
    position: absolute;
    right: 5px;
    top: 8px;
    pointer-events: none;
}

/* Scrollbars */
.hscroll, .vscroll {
    display: flex;
    background: #efefef;
}
.vscroll {
    flex-direction: column;
}
.hscroll button {
    width: 15px;
}
.vscroll button {
    height: 15px;
}
.hscroll button, .vscroll button {
    flex: none;
}
.hscroll svg, .vscroll svg {
    width: 8px;
    height: 8px;
}
.track {
    flex: 1;
    display: flex;
}
.vscroll .track {
    flex-direction: column;
}
.thumb {
    background: #cdcdcd;
}
.tree-track .thumb {
    width: 58%;
    margin-left: 9%;
}
.props-track .thumb {
    height: 93%;
}
.view-vtrack .thumb {
    height: 24%;
    margin: auto 0;
}
.view-htrack .thumb {
    width: 44%;
    margin: 0 auto;
}

/* Left side */
.workspace {
    flex: 1;
    min-height: 0;
    display: flex;
}
.inspector {
    width: 243px;
    flex: none;
    display: flex;
    flex-direction: column;
    padding-right: 4px;
    border-right: 1px solid #d0d0d0;
}
.components {
    flex: 14 1 0;
    min-height: 0;
    display: flex;
    flex-direction: column;
}
.panel-title {
    height: 14px;
    display: flex;
    align-items: center;
    justify-content: space-between;
    padding: 0 4px;
    border-bottom: 2px solid #777;
}
.panel-title h2 {
    font-size: 11px;
}
.panel-title button {
    width: 11px;
    height: 11px;
    background: #c8c8c8;
}
.panel-body {
    flex: 1;
    min-height: 0;
    display: flex;
    flex-direction: column;
    margin-left: 3px;
    border-left: 1px solid #808080;
}
.mini-tools {
    height: 32px;
    display: flex;
    align-items: center;
    gap: 9px;
    padding: 0 0 2px 5px;
}
.mini-tools svg {
    width: 16px;
    height: 16px;
}
.sep {
    width: 1px;
    height: 18px;
    background: #8c8c8c;
}
.tree {
    flex: 1;
    min-height: 0;
    display: flex;
    flex-direction: column;
    margin: 0 5px 2px 0;
    border: 1px solid #777;
    border-right-color: #ddd;
    border-bottom-color: #ddd;
    background: #fff;
}
.tree-head {
    display: grid;
    grid-template-columns: 55px 20px 1fr;
    height: 21px;
    line-height: 22px;
    border-bottom: 1px solid #dfe9f5;
}
.tree-head span {
    padding-left: 6px;
    border-right: 1px solid #dfe9f5;
}
.tree-head span:last-child {
    border: 0;
}
.tree-list {
    flex: 1;
    margin: 0;
    padding: 0;
    list-style: none;
    line-height: 16px;
}
.tree-list li {
    height: 16px;
    display: flex;
    align-items: center;
}
.root svg {
    margin-right: 4px;
}
.line {
    width: 17px;
    margin-right: 4px;
    border-top: 1px dotted #888;
}
.open .line {
    height: 9px;
    border: 0;
    background: linear-gradient(90deg, #fff 2px, #888 2px 3px) 0 0 / 3px 9px no-repeat, repeating-linear-gradient(90deg, #888 0 1px, #fff 1px 2px) 0 4px / 17px 1px no-repeat;
}
.branch {
    width: 12px;
    height: 16px;
    margin-left: 18px;
    background: repeating-linear-gradient(#888 0 1px, transparent 1px 2px) 0 0 / 1px 16px no-repeat, repeating-linear-gradient(90deg, #888 0 1px, transparent 1px 2px) 0 8px / 11px 1px no-repeat;
}
.item:not(:has(+ .item)) .branch {
    background-size: 1px 9px, 11px 1px;
}
.col {
    width: 12px;
    height: 14px;
    margin: 0 1px 0 5px;
}
.item a {
    flex: 1;
    display: flex;
    align-items: center;
    height: 16px;
    padding-left: 9px;
}
.ok {
    width: 12px;
    height: 12px;
    margin-right: 12px;
}
.selected a {
    background: #3399ff;
    color: #fff;
    outline: 1px dotted #c67a2e;
    outline-offset: -1px;
}
.tree .hscroll {
    height: 15px;
}
.sheet-tabs {
    height: 24px;
    display: flex;
    align-items: flex-start;
    border-top: 1px solid #555;
    font: 11px/16px "Open Sans", sans-serif;
}
.step {
    width: 17px;
    height: 17px;
    border: 1px solid #aaa;
    border-top-color: #fff;
    border-left-color: #fff;
}
.slant.on {
    background: #fff;
}
.sheet {
    flex: 1;
    height: 17px;
    white-space: nowrap;
}
.sheet.active {
    flex: none;
    padding: 0 7px 0 4px;
    background: #fff;
    font-weight: bold;
}
.properties {
    flex: 13 1 0;
    min-height: 0;
    display: flex;
    flex-direction: column;
    margin-left: 2px;
    border-left: 1px solid #777;
    border-top: 3px solid #666;
}
.props-body {
    flex: 1;
    min-height: 0;
    display: flex;
    justify-content: space-between;
    border-bottom: 1px solid #000;
}
.props-clip {
    overflow: hidden;
    background: #fff;
    align-self: stretch;
}
.props-body .vscroll {
    width: 15px;
    margin-right: 4px;
}
.props {
    width: 203px;
    table-layout: fixed;
    border-spacing: 0;
    line-height: 14px;
}
.c-gut {
    width: 11px;
}
.c-name {
    width: 53px;
}
.c-val {
    width: 82px;
}
.props th, .props td {
    height: 15px;
    padding: 0 0 0 3px;
    border-right: 1px solid #6f6f6f;
    border-bottom: 1px solid #6f6f6f;
    font-weight: normal;
    text-align: left;
    white-space: nowrap;
    overflow: hidden;
}
.props thead th {
    height: 19px;
    padding: 0;
    background: #c0c0c0;
    text-align: center;
}
.props .gut {
    padding: 0;
    border-bottom: 0;
    background: #fff;
}
.props .gut:has(+ .gut) {
    border-right: 0;
}
.gut button {
    width: 9px;
    height: 9px;
    margin: 1px auto 0;
    border: 1px solid #777;
    line-height: 7px;
    font-size: 9px;
}
.cat th {
    background: #a9c6ef;
    border-right: 0;
}
.cat.first th {
    height: 16px;
}
.sub th, .sub td {
    background: #c5d9f4;
}
.props .val {
    padding-right: 3px;
    text-align: right;
}
.props .link {
    padding-right: 0;
    color: #0000ff;
}
.props .wide {
    padding-right: 9px;
}
.props .unit {
    padding: 0;
    text-align: center;
}
.props-tab {
    height: 18px;
    display: flex;
    background: #fff;
    border-bottom: 1px solid #ccc;
}
.props-tab button {
    width: 63px;
    background: #f0f4fb;
    font-weight: bold;
    font-size: 12px;
}
.panel-switch {
    height: 25px;
    display: flex;
    gap: 3px;
    padding: 4px 0 4px 1px;
}
.panel-switch button {
    width: 20px;
    height: 16px;
    border-right: 1px solid #333;
    border-bottom: 1px solid #333;
    background: #f7f7f7;
}

/* Document window */
.document {
    flex: 1;
    min-width: 0;
    min-height: 0;
    display: grid;
    grid-template-columns: 1fr 17px;
    grid-template-rows: 22px 1fr 18px;
    border-left: 1px solid #6a6a6a;
    border-right: 1px solid #ddd;
}
.doc-tabs {
    grid-area: 1 / 1;
    display: flex;
    align-items: flex-end;
    padding-left: 2px;
    border-bottom: 1px solid #b0b0b0;
}
.doc-tabs button {
    height: 19px;
    padding: 0 2px;
    border: 1px solid #a8a8a8;
    border-bottom: 0;
}
.doc-tabs button:first-child {
    padding: 0 4px;
}
.doc-tabs .active {
    height: 21px;
    padding: 0 4px 3px;
    border-color: #fff;
    background: #fff;
}
.view {
    grid-area: 2 / 1;
    position: relative;
    min-height: 0;
    border-right: 1px solid #000;
    border-bottom: 1px solid #000;
    background: linear-gradient(#dae8f5, #dee7f6 5%, #e4eaf5 22%, #e9ecf4 33%, #efefef 46%, #efefef 54%, #e9ecf4 67%, #e4eaf5 80%, #dee7f6 96%, #dae8f5);
}
.drawing {
    width: 100%;
    height: 100%;
}
.dims text, .axes text {
    font-family: "Liberation Sans", Arial, sans-serif;
    font-size: 19px;
}
.dims text {
    fill: #800000;
}
.viewcube {
    position: absolute;
    top: 27px;
    right: 26px;
    width: 54px;
    height: 54px;
    border: 1px solid #a7b0be;
    background: linear-gradient(#dbe4f0, #c5cad8);
    box-shadow: 0 9px 6px -6px #888;
    font: bold 12px "Open Sans", sans-serif;
    color: #8c93a1;
}
.viewcube span {
    width: 34px;
    line-height: 34px;
    background: #cdd4e2;
}
.document .vscroll {
    grid-area: 1 / 2 / 3 / 3;
    width: 15px;
    margin: 1px auto 0;
}
.document .hscroll {
    grid-area: 3 / 1;
    height: 15px;
    margin-top: 1px;
}
.size-grip {
    grid-area: 3 / 2;
    align-self: center;
    justify-self: center;
}

/* Right dock */
.dock {
    width: 33px;
    flex: none;
    background: #f4f5f7;
    border-bottom: 1px solid #999;
}
.dock-bar {
    display: flex;
    flex-direction: column;
    align-items: center;
    padding-right: 2px;
    background: #efefef;
    border-bottom: 1px solid #999;
}
.dock-bar.second {
    margin-top: 10px;
    padding-bottom: 1px;
    border-top: 1px solid #999;
}
.dock-bar button {
    width: 24px;
    height: 29px;
}
.dock-bar svg {
    width: 24px;
    height: 24px;
}
.dock-bar text {
    font-size: 11px;
}
.dock-bar .apart {
    margin-top: 45px;
}
.grip-h {
    width: 27px;
    height: 2px;
    margin: 2px 0 3px;
    background: repeating-linear-gradient(90deg, #bbb 0 2px, #efefef 2px 5px);
}

/* Bottom bars */
.window-list {
    height: 21px;
    flex: none;
    display: flex;
    gap: 3px;
    padding: 3px 3px 2px;
    border-top: 1px solid #d5d5d5;
    border-bottom: 1px solid #d5d5d5;
}
.window-list button {
    height: 15px;
    justify-content: flex-start;
    padding: 0 9px 0 1px;
    border-right: 1px solid #aaa;
    border-bottom: 1px solid #aaa;
}
.window-list .active {
    background: #fff;
    border: 0;
    border-left: 1px solid #888;
    border-top: 1px solid #888;
}
.status {
    height: 14px;
    flex: none;
    display: flex;
    overflow: hidden;
    font: 11px/20px "Open Sans", sans-serif;
}
.status span {
    display: flex;
    flex: none;
    gap: 7px;
    padding-left: 7px;
    overflow: hidden;
    white-space: nowrap;
    border-right: 1px solid #ccc;
}
.status svg {
    margin-top: 3px;
}
.status .s-code {
    width: 140px;
    padding-left: 5px;
}
.s-reg {
    width: 300px;
}
.s-cube {
    width: 101px;
}
.s-steel {
    width: 119px;
}
.s-result {
    width: 220px;
}
```
